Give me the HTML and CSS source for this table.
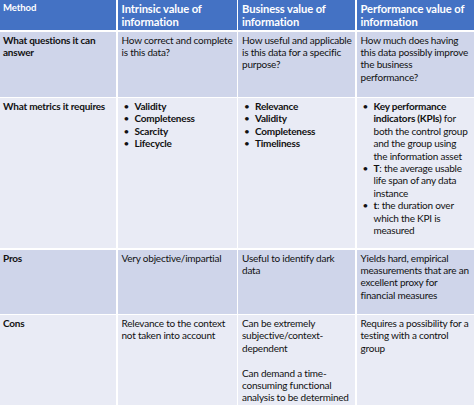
FILE: index.html
```html
<!DOCTYPE html>
<html>
<head>
<meta charset="utf-8">
<link rel="stylesheet" href="styles.css">
</head>
<body>
<div class="table">
  <div class="cell head">Method</div>
  <div class="cell head">Intrinsic value of information</div>
  <div class="cell head">Business value of information</div>
  <div class="cell head">Performance value of information</div>

  <div class="cell odd label">What questions it can answer</div>
  <div class="cell odd">How correct and complete is this data?</div>
  <div class="cell odd">How useful and applicable is this data for a specific purpose?</div>
  <div class="cell odd">How much does having this data possibly improve the business performance?</div>

  <div class="cell even label">What metrics it requires</div>
  <div class="cell even">
    <ul class="list">
      <li><b>Validity</b></li>
      <li><b>Completeness</b></li>
      <li><b>Scarcity</b></li>
      <li><b>Lifecycle</b></li>
    </ul>
  </div>
  <div class="cell even">
    <ul class="list">
      <li><b>Relevance</b></li>
      <li><b>Validity</b></li>
      <li><b>Completeness</b></li>
      <li><b>Timeliness</b></li>
    </ul>
  </div>
  <div class="cell even">
    <ul class="list">
      <li><b>Key performance indicators (KPIs)</b> for both the control group and the group using the information asset</li>
      <li><b>T</b>: the average usable life span of any data instance</li>
      <li><b>t</b>: the duration over which the KPI is measured</li>
    </ul>
  </div>

  <div class="cell odd label">Pros</div>
  <div class="cell odd">Very objective/impartial</div>
  <div class="cell odd">Useful to identify dark data</div>
  <div class="cell odd">Yields hard, empirical measurements that are an excellent proxy for financial measures</div>

  <div class="cell even label">Cons</div>
  <div class="cell even">Relevance to the context not taken into account</div>
  <div class="cell even">
    <p class="para">Can be extremely subjective/context-dependent</p>
    <p class="para">Can demand a time-consuming functional analysis to be determined</p>
  </div>
  <div class="cell even">Requires a possibility for a testing with a control group</div>
</div>
</body>
</html>
```

FILE: styles.css
```css
html, body {
  margin: 0;
  padding: 0;
  background: #ffffff;
}

body {
  width: 474px;
  height: 405px;
  overflow: hidden;
  font-family: Lato, "Open Sans", sans-serif;
  font-size: 10px;
  letter-spacing: -0.22px;
  line-height: 12.4px;
  color: #111111;
}

.table {
  display: grid;
  grid-template-columns: 116px 119px 117px 1fr;
  grid-template-rows: 30px 65px 150px 64px 1fr;
  column-gap: 1.5px;
  row-gap: 1.5px;
  height: 405px;
  background: #ffffff;
}

.cell {
  padding: 2px 2px 0 4px;
  box-sizing: border-box;
  overflow: hidden;
}

.head {
  background: #4472c4;
  color: #ffffff;
  font-weight: bold;
  font-size: 11.2px;
  letter-spacing: -0.1px;
  line-height: 13px;
  padding-top: 2px;
}

.head:first-child {
  font-size: 9.6px;
  padding-left: 3px;
  padding-top: 1px;
}

.odd {
  background: #cfd5ea;
}

.even {
  background: #e9ebf5;
}

.label {
  font-weight: bold;
  padding-left: 3px;
}

.list {
  list-style: none;
  margin: 0;
  padding: 0;
}

.list li {
  position: relative;
  padding-left: 13px;
}

.list li::before {
  content: "\2022";
  position: absolute;
  left: 2px;
  top: 0;
}

.para {
  margin: 0 0 12.4px 0;
}
```
